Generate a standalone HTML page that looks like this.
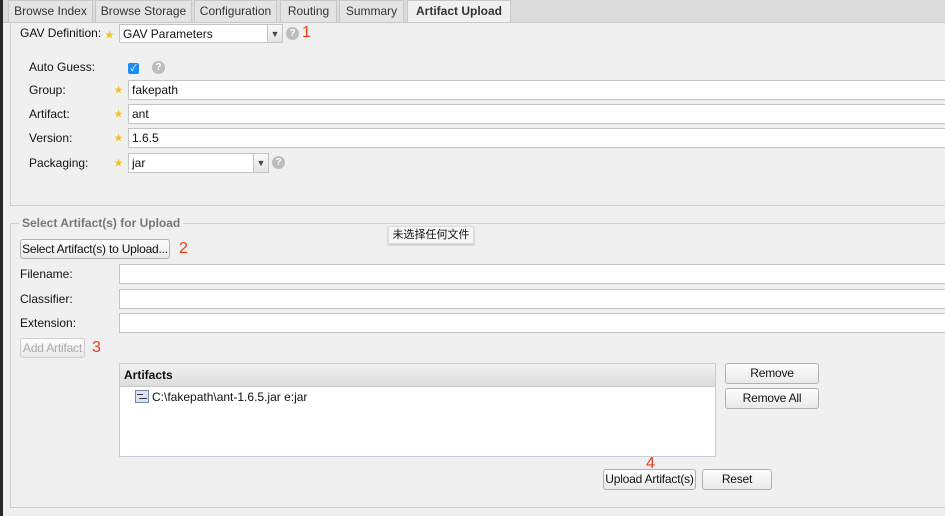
<!DOCTYPE html>
<html><head><meta charset="utf-8"><style>
*{box-sizing:border-box;margin:0;padding:0}
body{width:945px;height:516px;overflow:hidden;background:#f0f0f0;font-family:"Liberation Sans","Noto Sans CJK SC",sans-serif;font-size:12px;color:#111;position:relative}
div{white-space:nowrap}
.a{position:absolute}
.tab{position:absolute;top:0;height:22px;background:#e4e4e4;border:1px solid #c8c8c8;border-bottom:none;font-size:12px;color:#333;text-align:center;line-height:21px}
.in{position:absolute;background:#fff;border:1px solid #c4c4c4;height:20px;line-height:18px;padding-left:3px;font-size:12px}
.lbl{position:absolute;font-size:12px;color:#111}
.star{position:absolute;color:#f4c020;font-size:9px}
.q{position:absolute;width:13px;height:13px;border-radius:50%;background:#bcbcbc;color:#fff;font-size:10px;font-weight:bold;text-align:center;line-height:13px}
.btn{position:absolute;background:linear-gradient(#fdfdfd,#e9e9e9);border:1px solid #b0b0b0;border-radius:3px;text-align:center;font-size:12px;line-height:18px;color:#111;letter-spacing:-0.2px}
.red{position:absolute;color:#ee3a1a;font-size:16px}
.dd{position:absolute;top:0;right:0;width:15px;height:100%;border-left:1px solid #c4c4c4;background:linear-gradient(#fafafa,#e2e2e2);font-size:9px;text-align:center;line-height:18px;color:#444}
</style></head><body>
<div class="a" style="left:0;top:0;width:3px;height:516px;background:#2a2a2a"></div>
<div class="a" style="left:3px;top:0;width:942px;height:22px;background:#dcdcdc"></div>
<div class="tab" style="left:8px;width:85px">Browse Index</div>
<div class="tab" style="left:95px;width:97px">Browse Storage</div>
<div class="tab" style="left:194px;width:83px">Configuration</div>
<div class="tab" style="left:280px;width:57px">Routing</div>
<div class="tab" style="left:339px;width:65px">Summary</div>
<div class="tab" style="left:407px;width:104px;background:#f0f0f0;font-weight:bold;height:23px">Artifact Upload</div>
<div class="a" style="left:3px;top:22px;width:942px;height:1px;background:#c8c8c8"></div>

<div class="a" style="left:10px;top:23px;width:940px;height:183px;border-left:1px solid #d0d0d0;border-bottom:1px solid #d0d0d0"></div>
<div class="lbl" style="left:20px;top:26px">GAV Definition:</div>
<div class="star" style="left:105px;top:28px">★</div>
<div class="in" style="left:119px;top:24px;width:164px;height:19px">GAV Parameters<div class="dd">▼</div></div>
<div class="q" style="left:286px;top:27px">?</div>
<div class="red" style="left:302px;top:24px">1</div>

<div class="lbl" style="left:29px;top:60px">Auto Guess:</div>
<div class="a" style="left:128px;top:63px;width:11px;height:11px;background:#1a8cf0;border-radius:2px;color:#fff;font-size:9px;line-height:11px;text-align:center">✓</div>
<div class="q" style="left:152px;top:61px">?</div>
<div class="lbl" style="left:29px;top:83px">Group:</div><div class="star" style="left:114px;top:83px">★</div>
<div class="in" style="left:128px;top:80px;width:830px">fakepath</div>
<div class="lbl" style="left:29px;top:107px">Artifact:</div><div class="star" style="left:114px;top:107px">★</div>
<div class="in" style="left:128px;top:104px;width:830px">ant</div>
<div class="lbl" style="left:29px;top:131px">Version:</div><div class="star" style="left:114px;top:131px">★</div>
<div class="in" style="left:128px;top:128px;width:830px">1.6.5</div>
<div class="lbl" style="left:29px;top:156px">Packaging:</div><div class="star" style="left:114px;top:156px">★</div>
<div class="in" style="left:128px;top:153px;width:141px">jar<div class="dd">▼</div></div>
<div class="q" style="left:272px;top:156px">?</div>

<div class="a" style="left:10px;top:223px;width:940px;height:285px;border-left:1px solid #d0d0d0;border-top:1px solid #d0d0d0;border-bottom:1px solid #d0d0d0"></div>
<div class="a" style="left:19px;top:216px;padding:0 3px;background:#f0f0f0;color:#777;font-weight:bold;font-size:12px">Select Artifact(s) for Upload</div>
<div class="btn" style="left:20px;top:239px;width:150px;height:20px">Select Artifact(s) to Upload...</div>
<div class="red" style="left:179px;top:240px">2</div>
<div class="a" style="left:388px;top:226px;width:86px;height:18px;background:#f6f6f6;border:1px solid #ddd;box-shadow:0 1px 2px #bbb;font-size:11px;text-align:center;line-height:17px">未选择任何文件</div>
<div class="lbl" style="left:20px;top:267px">Filename:</div>
<div class="in" style="left:119px;top:264px;width:840px"></div>
<div class="lbl" style="left:20px;top:292px">Classifier:</div>
<div class="in" style="left:119px;top:289px;width:840px"></div>
<div class="lbl" style="left:20px;top:316px">Extension:</div>
<div class="in" style="left:119px;top:313px;width:840px"></div>
<div class="btn" style="left:20px;top:338px;width:65px;height:20px;color:#aaa;border-color:#d0d0d0">Add Artifact</div>
<div class="red" style="left:92px;top:339px">3</div>

<div class="a" style="left:119px;top:363px;width:597px;height:94px;background:#fff;border:1px solid #c8cad8"></div>
<div class="a" style="left:120px;top:364px;width:595px;height:23px;background:linear-gradient(#f3f3f3,#dcdcdc);border-bottom:1px solid #c8c8c8;font-weight:bold;font-size:12px;padding-left:4px;line-height:23px">Artifacts</div>
<div class="a" style="left:135px;top:390px;width:14px;height:13px;background:#dde4ee;border:1px solid #7788aa"></div>
<div class="a" style="left:137px;top:394px;width:6px;height:1px;background:#335"></div>
<div class="a" style="left:139px;top:398px;width:8px;height:1px;background:#335"></div>
<div class="lbl" style="left:152px;top:390px">C:\fakepath\ant-1.6.5.jar e:jar</div>

<div class="btn" style="left:725px;top:363px;width:94px;height:21px">Remove</div>
<div class="btn" style="left:725px;top:388px;width:94px;height:21px">Remove All</div>
<div class="red" style="left:646px;top:455px">4</div>
<div class="btn" style="left:603px;top:469px;width:93px;height:21px">Upload Artifact(s)</div>
<div class="btn" style="left:702px;top:469px;width:70px;height:21px">Reset</div>
</body></html>
